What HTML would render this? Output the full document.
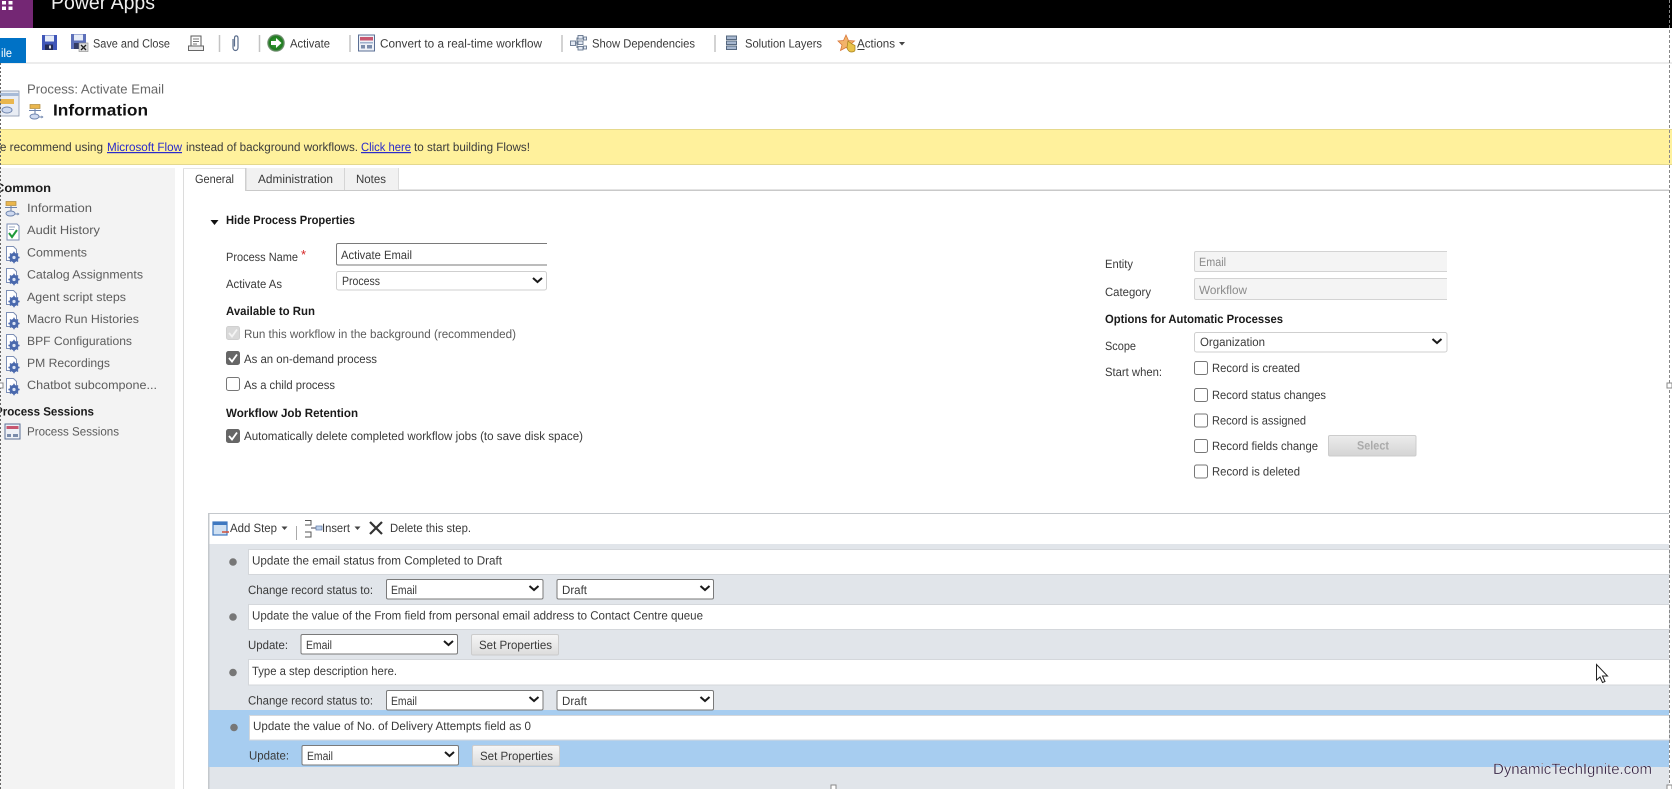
<!DOCTYPE html>
<html><head><meta charset="utf-8"><title>Power Apps - Process: Activate Email</title>
<style>
html,body{margin:0;padding:0;background:#fff;width:1672px;height:789px;overflow:hidden}
svg{display:block;position:absolute;left:0;top:0}
text{font-family:"Liberation Sans",sans-serif;font-size:12px;fill:#3a3a3a;text-rendering:geometricPrecision;filter:blur(.35px)}
.b{font-weight:bold;fill:#1a1a1a}
.s{fill:#5c5c5c}
.d{fill:#8a8a8a}
.sel{fill:#fff;stroke:#7a7a7a;stroke-width:1}
.lsel{fill:#fff;stroke:#cfcfcf;stroke-width:1}
.ch{fill:none;stroke:#1a1a1a;stroke-width:2}
.row{fill:#fff}
.sep{stroke:#c4c4c4;stroke-width:1.5}
</style></head><body>
<svg width="1672" height="789" viewBox="0 0 1672 789" xmlns="http://www.w3.org/2000/svg">
<defs>
<linearGradient id="btn" x1="0" y1="0" x2="0" y2="1"><stop offset="0" stop-color="#f6f6f6"/><stop offset="1" stop-color="#dcdcdc"/></linearGradient>
<linearGradient id="btn2" x1="0" y1="0" x2="0" y2="1"><stop offset="0" stop-color="#ececec"/><stop offset="1" stop-color="#d4d4d4"/></linearGradient>
<radialGradient id="grn"><stop offset="0" stop-color="#3fae3f"/><stop offset=".75" stop-color="#1d7a1d"/><stop offset="1" stop-color="#8d9a8d"/></radialGradient>
<symbol id="gear" viewBox="0 0 17 18" overflow="visible">
<path d="M2.5 1.5H9.500L12.500 4.500V15.500H2.500Z" fill="#fff" stroke="#7d8fb5" stroke-width="1"/>
<circle cx="10" cy="12.500" r="4.600" fill="#4a69ad"/><circle cx="10" cy="12.500" r="1.600" fill="#dbe4f5"/>
<path d="M10 6.800V8.500M10 16.500V18.200M4.400 12.500H6M14 12.500H15.600M6 8.500L7.200 9.700M12.800 15.300L14 16.500M6 16.500L7.200 15.300M12.800 9.700L14 8.500" stroke="#4a69ad" stroke-width="1.500"/>
</symbol>
<symbol id="proc" viewBox="0 0 16 16" overflow="visible">
<rect x="2" y="0.500" width="10" height="4" fill="#e9b64e" stroke="#b08a3c" stroke-width=".7"/>
<path d="M1 6.500H13M7 5V11" stroke="#6e84ad" stroke-width="1.100" fill="none"/>
<ellipse cx="6.500" cy="12.500" rx="4.500" ry="2.500" fill="#cfdaf0" stroke="#6e84ad"/>
<path d="M11 13H15" stroke="#6e84ad"/><path d="M13.500 11.500L15.500 13L13.500 14.500Z" fill="#6e84ad"/>
</symbol>
</defs>

<!-- top bar -->
<rect x="0" y="0" width="1672" height="28" fill="#000"/>
<rect x="0" y="0" width="33" height="28" fill="#742774"/>
<rect x="2" y="1" width="4" height="3.500" fill="#fff"/><rect x="8.500" y="1" width="4" height="3.500" fill="#fff"/>
<rect x="2" y="6.500" width="4" height="3.500" fill="#fff"/><rect x="8.500" y="6.500" width="4" height="3.500" fill="#fff"/>
<text x="51" y="9" style="font-size:20px;fill:#eee" textLength="104" lengthAdjust="spacingAndGlyphs">Power Apps</text>

<!-- command bar -->
<rect x="0" y="62.500" width="1672" height="1" fill="#d9d9d9"/>
<rect x="0" y="38" width="26" height="25" fill="#0072c6"/>
<text x="1" y="57" style="font-size:12px;fill:#fff" textLength="11" lengthAdjust="spacingAndGlyphs">ile</text>

<!-- save -->
<rect x="42" y="35" width="15" height="15" fill="#3f56b8"/><rect x="45" y="35.500" width="9" height="6" fill="#e6ecf7"/><rect x="45" y="44.500" width="8" height="5.500" fill="#222a55"/><rect x="49" y="45.500" width="2" height="3" fill="#ddd"/>
<!-- save close -->
<rect x="71" y="34" width="15" height="15" fill="#5d70ba"/><rect x="74" y="34.500" width="9" height="6" fill="#e6ecf7"/><rect x="74" y="43" width="8" height="6" fill="#333c66"/>
<rect x="79" y="43" width="9" height="8.500" fill="#ddd" stroke="#888" stroke-width=".6"/><path d="M81 45L86 50M86 45L81 50" stroke="#222" stroke-width="1.300"/>
<text x="93" y="47.500" textLength="77" lengthAdjust="spacingAndGlyphs">Save and Close</text>
<!-- print -->
<path d="M191 36H201V46H191Z" fill="#fff" stroke="#5a5a5a"/><path d="M193 39H199M193 41.500H199M193 44H197" stroke="#777"/><rect x="188.500" y="46" width="15" height="4.500" fill="#eee" stroke="#666"/>
<line x1="219.500" y1="35" x2="219.500" y2="52" class="sep"/>
<!-- clip -->
<path d="M233 39V47.500C233 51.500 238 51.500 238 47.500V38.500C238 35 234.500 35 234.500 38.500V46.500" fill="none" stroke="#5a6d8c" stroke-width="1.200"/>
<line x1="259.500" y1="35" x2="259.500" y2="52" class="sep"/>
<!-- activate -->
<circle cx="276" cy="43" r="8.800" fill="url(#grn)"/><path d="M271 41H276V38L281.500 43L276 48V45H271Z" fill="#fff"/>
<text x="290" y="47.500" textLength="40" lengthAdjust="spacingAndGlyphs">Activate</text>
<line x1="350" y1="35" x2="350" y2="52" class="sep"/>
<!-- convert -->
<rect x="358.500" y="35" width="16" height="16" fill="#eef1f7" stroke="#5b6f94"/><rect x="360" y="37" width="13" height="3.500" fill="#c7566f"/><rect x="360" y="42" width="13" height="1.500" fill="#9fb0cc"/><rect x="361" y="45" width="4" height="3.500" fill="#7a8cab"/><rect x="367" y="45" width="5" height="3.500" fill="#7a8cab"/>
<text x="380" y="47.500" textLength="162" lengthAdjust="spacingAndGlyphs">Convert to a real-time workflow</text>
<line x1="562" y1="35" x2="562" y2="52" class="sep"/>
<!-- deps -->
<g fill="#e3e9f3" stroke="#66778f" stroke-width=".9"><rect x="570.500" y="41" width="5" height="4.500"/><rect x="578" y="35.500" width="5" height="3.500"/><rect x="578" y="41" width="5" height="3.500"/><rect x="578" y="46.500" width="5" height="3.500"/><rect x="583.500" y="37" width="3" height="3"/><rect x="583.500" y="46" width="3" height="3"/></g>
<path d="M575.500 43H578M577 37.500V48" stroke="#66778f" fill="none"/>
<text x="592" y="47.500" textLength="103" lengthAdjust="spacingAndGlyphs">Show Dependencies</text>
<line x1="715" y1="35" x2="715" y2="52" class="sep"/>
<!-- layers -->
<g fill="#a7b7cf" stroke="#56687f"><rect x="726.500" y="36" width="10" height="3.500"/><rect x="726.500" y="41" width="10" height="3.500"/><rect x="726.500" y="46" width="10" height="3.500"/></g>
<text x="745" y="47.500" textLength="77" lengthAdjust="spacingAndGlyphs">Solution Layers</text>
<!-- actions -->
<path d="M846 35L848.500 40.500L854.500 41L850 45L851.500 50.500L846 47.500L840.500 50.500L842 45L838 41L843.500 40.500Z" fill="#f2b36a" stroke="#d8763a" stroke-width=".8"/>
<path d="M848 41L852 44L855 45.500V50C855 51.500 853 52 851 52C849 52 847.500 50 847 47.500Z" fill="#e9c24a" stroke="#a6801e" stroke-width=".7"/>
<text x="857" y="47.500" textLength="38" lengthAdjust="spacingAndGlyphs">Actions</text>
<rect x="857.500" y="49" width="7" height="1" fill="#3a3a3a"/>
<path d="M899 42H905L902 45.500Z" fill="#444"/>

<!-- title -->
<rect x="0" y="91" width="19" height="25" fill="#e9edf4" stroke="#8794ad" stroke-width=".8"/><rect x="0" y="93" width="19" height="3" fill="#a7bbd8"/>
<rect x="0" y="99" width="14" height="5" fill="#e9b64e"/><ellipse cx="7" cy="110" rx="5" ry="3" fill="#cfdaf0" stroke="#6e84ad"/>
<text x="27" y="93.500" style="font-size:13px;fill:#666" textLength="137" lengthAdjust="spacingAndGlyphs">Process: Activate Email</text>
<use href="#proc" x="28" y="104" width="16" height="16"/>
<text x="53" y="115.500" class="b" style="font-size:16px;fill:#111" textLength="95" lengthAdjust="spacingAndGlyphs">Information</text>

<!-- yellow -->
<rect x="0" y="129.500" width="1672" height="35" fill="#fff19c"/>
<rect x="0" y="129" width="1672" height="1" fill="#e6d98c"/><rect x="0" y="164" width="1672" height="1" fill="#e4d88e"/>
<text x="-11" y="151" textLength="114" lengthAdjust="spacingAndGlyphs">We recommend using</text>
<text x="107" y="151" style="fill:#2a2acb;text-decoration:underline" textLength="75" lengthAdjust="spacingAndGlyphs">Microsoft Flow</text>
<text x="186" y="151" textLength="172" lengthAdjust="spacingAndGlyphs">instead of background workflows.</text>
<text x="361" y="151" style="fill:#2a2acb;text-decoration:underline" textLength="50" lengthAdjust="spacingAndGlyphs">Click here</text>
<text x="414" y="151" textLength="116" lengthAdjust="spacingAndGlyphs">to start building Flows!</text>

<!-- sidebar -->
<rect x="0" y="168" width="175" height="621" fill="#f3f3f3"/>
<text x="-5" y="192" class="b" textLength="56" lengthAdjust="spacingAndGlyphs">Common</text>
<use href="#proc" x="4" y="201" width="16" height="16"/>
<text x="27" y="212" class="s" textLength="65" lengthAdjust="spacingAndGlyphs">Information</text>
<path d="M7 224H17L19 226V240H7Z" fill="#fff" stroke="#7d8fb5"/><path d="M9 233L12 237L17 230" fill="none" stroke="#1f9a3a" stroke-width="2"/><path d="M9 227H15M9 229.500H14" stroke="#9aa8c2"/>
<text x="27" y="234" class="s" textLength="73" lengthAdjust="spacingAndGlyphs">Audit History</text>
<use href="#gear" x="4" y="245" width="17" height="18"/>
<text x="27" y="256.500" class="s" textLength="60" lengthAdjust="spacingAndGlyphs">Comments</text>
<use href="#gear" x="4" y="267" width="17" height="18"/>
<text x="27" y="278.500" class="s" textLength="116" lengthAdjust="spacingAndGlyphs">Catalog Assignments</text>
<use href="#gear" x="4" y="289" width="17" height="18"/>
<text x="27" y="301" class="s" textLength="99" lengthAdjust="spacingAndGlyphs">Agent script steps</text>
<use href="#gear" x="4" y="311" width="17" height="18"/>
<text x="27" y="323" class="s" textLength="112" lengthAdjust="spacingAndGlyphs">Macro Run Histories</text>
<use href="#gear" x="4" y="333" width="17" height="18"/>
<text x="27" y="345" class="s" textLength="105" lengthAdjust="spacingAndGlyphs">BPF Configurations</text>
<use href="#gear" x="4" y="355" width="17" height="18"/>
<text x="27" y="367" class="s" textLength="83" lengthAdjust="spacingAndGlyphs">PM Recordings</text>
<use href="#gear" x="4" y="377" width="17" height="18"/>
<text x="27" y="389" class="s" textLength="130" lengthAdjust="spacingAndGlyphs">Chatbot subcompone...</text>
<text x="-5" y="415.500" class="b" textLength="99" lengthAdjust="spacingAndGlyphs">Process Sessions</text>
<rect x="5" y="424" width="15" height="15" fill="#eef1f7" stroke="#5b6f94"/><rect x="6.500" y="426" width="12" height="3" fill="#c7566f"/><rect x="7" y="434" width="4" height="3" fill="#7a8cab"/><rect x="13" y="434" width="5" height="3" fill="#7a8cab"/>
<text x="27" y="435.500" class="s" textLength="92" lengthAdjust="spacingAndGlyphs">Process Sessions</text>

<!-- tabs -->
<rect x="183" y="168" width="1" height="621" fill="#dcdcdc"/>
<rect x="245" y="189.500" width="1424" height="1.500" fill="#c9c9c9"/>
<rect x="246" y="168" width="98" height="22" fill="#f1f1f1"/><rect x="345" y="168" width="53" height="22" fill="#f1f1f1"/>
<rect x="183" y="168" width="62" height="1" fill="#e4e4e4"/>
<rect x="245" y="168" width="1.500" height="23" fill="#cfcfcf"/><rect x="344" y="168" width="1" height="22" fill="#d5d5d5"/><rect x="398" y="168" width="1" height="22" fill="#dcdcdc"/>
<text x="195" y="183" textLength="39" lengthAdjust="spacingAndGlyphs">General</text>
<text x="258" y="183" textLength="75" lengthAdjust="spacingAndGlyphs">Administration</text>
<text x="356" y="183" textLength="30" lengthAdjust="spacingAndGlyphs">Notes</text>

<!-- left form -->
<path d="M210.500 220H218.500L214.500 225Z" fill="#111"/>
<text x="226" y="224" class="b" textLength="129" lengthAdjust="spacingAndGlyphs">Hide Process Properties</text>
<text x="226" y="261" textLength="72" lengthAdjust="spacingAndGlyphs">Process Name</text>
<text x="301" y="259" style="font-size:13px;fill:#d62b2b">*</text>
<path d="M547 243.500H338Q336.500 243.500 336.500 245V263.500Q336.500 265 338 265H547" fill="#fff" stroke="#7a7a7a"/>
<text x="341" y="259" textLength="71" lengthAdjust="spacingAndGlyphs">Activate Email</text>
<text x="226" y="288" textLength="56" lengthAdjust="spacingAndGlyphs">Activate As</text>
<rect x="336.500" y="271.500" width="210" height="18.500" rx="2" class="lsel"/>
<text x="342" y="285" textLength="38" lengthAdjust="spacingAndGlyphs">Process</text>
<path d="M533 278L537.500 282L542 278" class="ch"/>
<text x="226" y="315" class="b" textLength="89" lengthAdjust="spacingAndGlyphs">Available to Run</text>
<rect x="226.500" y="326.500" width="13" height="13" rx="2" fill="#d9d9d9" stroke="#d0d0d0"/><path d="M229 333L232 336.500L237 329.500" fill="none" stroke="#f4f4f4" stroke-width="1.800"/>
<text x="244" y="338" class="s" textLength="272" lengthAdjust="spacingAndGlyphs">Run this workflow in the background (recommended)</text>
<rect x="226.500" y="351.500" width="13" height="13" rx="2" fill="#666" stroke="#666"/><path d="M229 358L232 361.500L237 354.500" fill="none" stroke="#fff" stroke-width="1.800"/>
<text x="244" y="363" textLength="133" lengthAdjust="spacingAndGlyphs">As an on-demand process</text>
<rect x="226.500" y="377.500" width="13" height="13" rx="2" fill="#fff" stroke="#777"/>
<text x="244" y="389" textLength="91" lengthAdjust="spacingAndGlyphs">As a child process</text>
<text x="226" y="417" class="b" textLength="132" lengthAdjust="spacingAndGlyphs">Workflow Job Retention</text>
<rect x="226.500" y="429.500" width="13" height="13" rx="2" fill="#666" stroke="#666"/><path d="M229 436L232 439.500L237 432.500" fill="none" stroke="#fff" stroke-width="1.800"/>
<text x="244" y="440" textLength="339" lengthAdjust="spacingAndGlyphs">Automatically delete completed workflow jobs (to save disk space)</text>

<!-- right form -->
<text x="1105" y="268" textLength="28" lengthAdjust="spacingAndGlyphs">Entity</text>
<path d="M1447 251.500H1196Q1194.500 251.500 1194.500 253V270Q1194.500 271.500 1196 271.500H1447" fill="#f4f4f4" stroke="#d3d3d3"/>
<text x="1199" y="266" class="d" textLength="27" lengthAdjust="spacingAndGlyphs">Email</text>
<text x="1105" y="296" textLength="46" lengthAdjust="spacingAndGlyphs">Category</text>
<path d="M1447 278.500H1196Q1194.500 278.500 1194.500 280V298Q1194.500 299.500 1196 299.500H1447" fill="#f4f4f4" stroke="#d3d3d3"/>
<text x="1199" y="294" class="d" textLength="48" lengthAdjust="spacingAndGlyphs">Workflow</text>
<text x="1105" y="323" class="b" textLength="178" lengthAdjust="spacingAndGlyphs">Options for Automatic Processes</text>
<text x="1105" y="350" textLength="31" lengthAdjust="spacingAndGlyphs">Scope</text>
<rect x="1194.500" y="332.500" width="252.500" height="19.500" rx="2" class="lsel"/>
<text x="1200" y="346" textLength="65" lengthAdjust="spacingAndGlyphs">Organization</text>
<path d="M1432.500 339L1437 343L1441.500 339" class="ch"/>
<text x="1105" y="376" textLength="57" lengthAdjust="spacingAndGlyphs">Start when:</text>
<g fill="#fff" stroke="#777">
<rect x="1194.500" y="361.500" width="13" height="13" rx="2"/>
<rect x="1194.500" y="388.500" width="13" height="13" rx="2"/>
<rect x="1194.500" y="414" width="13" height="13" rx="2"/>
<rect x="1194.500" y="439.500" width="13" height="13" rx="2"/>
<rect x="1194.500" y="465" width="13" height="13" rx="2"/>
</g>
<text x="1212" y="372" textLength="88" lengthAdjust="spacingAndGlyphs">Record is created</text>
<text x="1212" y="399" textLength="114" lengthAdjust="spacingAndGlyphs">Record status changes</text>
<text x="1212" y="424.500" textLength="94" lengthAdjust="spacingAndGlyphs">Record is assigned</text>
<text x="1212" y="450" textLength="106" lengthAdjust="spacingAndGlyphs">Record fields change</text>
<text x="1212" y="475.500" textLength="88" lengthAdjust="spacingAndGlyphs">Record is deleted</text>
<rect x="1328.500" y="435.500" width="87.500" height="20.500" rx="1.500" fill="url(#btn2)" stroke="#ccc"/>
<text x="1357" y="449.500" style="fill:#aaa;font-weight:bold" textLength="32" lengthAdjust="spacingAndGlyphs">Select</text>

<!-- step panel -->
<rect x="208" y="513" width="1461" height="31" fill="#fff"/>
<rect x="208" y="544" width="1461" height="245" fill="#e1e5ea"/>
<rect x="208" y="513" width="1461" height="1" fill="#c4c8cc"/>
<rect x="208" y="513" width="1.500" height="276" fill="#c4c8cc"/>
<rect x="213" y="522" width="14" height="13" fill="#cfe0f2" stroke="#3f78c0" stroke-width="1.200"/><rect x="213" y="522" width="14" height="3" fill="#3f78c0"/><path d="M222 532H229" stroke="#d0503a" stroke-width="1.500"/>
<text x="230" y="532" textLength="47" lengthAdjust="spacingAndGlyphs">Add Step</text>
<path d="M281.500 526.500H287.500L284.500 530Z" fill="#444"/>
<line x1="296.500" y1="526" x2="296.500" y2="540" stroke="#aaa"/>
<path d="M305 520.500H311V525H305M305 532H311V537H305" fill="none" stroke="#555"/>
<path d="M311 528H316" stroke="#445"/><rect x="316" y="526" width="6" height="4" fill="#bcd0ea" stroke="#5a76a5" stroke-width=".7"/>
<text x="322" y="532" textLength="28" lengthAdjust="spacingAndGlyphs">Insert</text>
<path d="M354.500 526.500H360.500L357.500 530Z" fill="#444"/>
<path d="M370 522L382 534M382 522L370 534" stroke="#333" stroke-width="2.200"/>
<text x="390" y="532" textLength="81" lengthAdjust="spacingAndGlyphs">Delete this step.</text>

<!-- step rows -->
<rect x="208.500" y="710" width="1460.500" height="57" fill="#a7cdf0"/>

<g fill="#fff" stroke="#d4d7db">
<rect x="248.500" y="549.500" width="1421" height="25"/>
<rect x="248.500" y="604.500" width="1421" height="25"/>
<rect x="248.500" y="659.500" width="1421" height="25.500"/>
<rect x="249.500" y="715.500" width="1420" height="24.500"/>
</g>
<g fill="#777"><circle cx="233" cy="562" r="3.800"/><circle cx="233" cy="617" r="3.800"/><circle cx="233" cy="672.500" r="3.800"/><circle cx="234" cy="727.500" r="3.800"/></g>

<text x="252" y="564.500" textLength="250" lengthAdjust="spacingAndGlyphs">Update the email status from Completed to Draft</text>
<text x="248" y="594" textLength="125" lengthAdjust="spacingAndGlyphs">Change record status to:</text>
<rect x="386.500" y="579.500" width="156.500" height="19.500" rx="1.500" class="sel"/><text x="391" y="594" textLength="26" lengthAdjust="spacingAndGlyphs">Email</text><path d="M529.500 586L534 590L538.500 586" class="ch"/>
<rect x="557" y="579.500" width="156.500" height="19.500" rx="1.500" class="sel"/><text x="562" y="594" textLength="25" lengthAdjust="spacingAndGlyphs">Draft</text><path d="M700.500 586L705 590L709.500 586" class="ch"/>

<text x="252" y="619.500" textLength="451" lengthAdjust="spacingAndGlyphs">Update the value of the From field from personal email address to Contact Centre queue</text>
<text x="248" y="649" textLength="40" lengthAdjust="spacingAndGlyphs">Update:</text>
<rect x="301" y="634.500" width="156.500" height="19.500" rx="1.500" class="sel"/><text x="306" y="649" textLength="26" lengthAdjust="spacingAndGlyphs">Email</text><path d="M444 641L448.500 645L453 641" class="ch"/>
<rect x="471.500" y="634.500" width="87" height="20.500" rx="1.500" fill="url(#btn)" stroke="#ccc"/><text x="479" y="649" textLength="73" lengthAdjust="spacingAndGlyphs">Set Properties</text>

<text x="252" y="675" textLength="145" lengthAdjust="spacingAndGlyphs">Type a step description here.</text>
<text x="248" y="704.500" textLength="125" lengthAdjust="spacingAndGlyphs">Change record status to:</text>
<rect x="386.500" y="690.500" width="156.500" height="19.500" rx="1.500" class="sel"/><text x="391" y="705" textLength="26" lengthAdjust="spacingAndGlyphs">Email</text><path d="M529.500 697L534 701L538.500 697" class="ch"/>
<rect x="557" y="690.500" width="156.500" height="19.500" rx="1.500" class="sel"/><text x="562" y="705" textLength="25" lengthAdjust="spacingAndGlyphs">Draft</text><path d="M700.500 697L705 701L709.500 697" class="ch"/>

<text x="253" y="730" textLength="278" lengthAdjust="spacingAndGlyphs">Update the value of No. of Delivery Attempts field as 0</text>
<text x="249" y="759.500" textLength="40" lengthAdjust="spacingAndGlyphs">Update:</text>
<rect x="302" y="745.500" width="156.500" height="19.500" rx="1.500" class="sel"/><text x="307" y="760" textLength="26" lengthAdjust="spacingAndGlyphs">Email</text><path d="M445 752L449.500 756L454 752" class="ch"/>
<rect x="472.500" y="745.500" width="87" height="20.500" rx="1.500" fill="url(#btn)" stroke="#ccc"/><text x="480" y="760" textLength="73" lengthAdjust="spacingAndGlyphs">Set Properties</text>

<!-- cursor -->
<path d="M1596.500 664.500V680L1600 677L1602.500 682.500L1605 681.500L1602.500 676H1607.500Z" fill="#fff" stroke="#222" stroke-width="1"/>

<!-- watermark -->
<text x="1493" y="774" style="font-size:15px;fill:#2b1a3d;stroke:#fff;stroke-width:.25px;filter:none" textLength="159" lengthAdjust="spacingAndGlyphs">DynamicTechIgnite.com</text>

<!-- selection dashes and handles -->
<line x1="0.500" y1="63" x2="0.500" y2="789" stroke="#666" stroke-dasharray="2 2"/>
<line x1="1669.500" y1="0" x2="1669.500" y2="789" stroke="#888" stroke-dasharray="3 2"/>
<rect x="-2" y="383" width="5" height="5" fill="#fff" stroke="#888"/>
<rect x="1667" y="383" width="5" height="5" fill="#fff" stroke="#888"/>
<rect x="831" y="785" width="5" height="5" fill="#fff" stroke="#888"/>
<rect x="1667" y="785" width="5" height="5" fill="#fff" stroke="#888"/>
</svg>
</body></html>
